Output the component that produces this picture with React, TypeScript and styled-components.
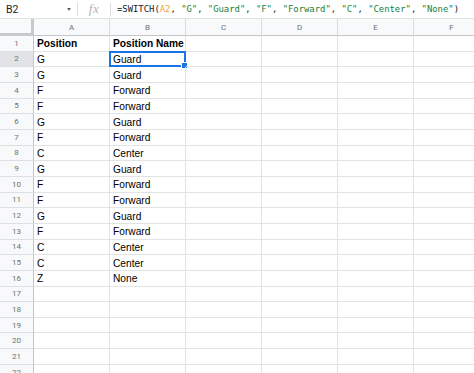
import React from "react";
import styled, { createGlobalStyle } from "styled-components";

const Global = createGlobalStyle`
  html, body { margin: 0; padding: 0; background: #fff; overflow: hidden; }
  body { font-family: "Liberation Sans", Arial, sans-serif; }
`;

const Page = styled.div`
  width: 474px;
  height: 373px;
  overflow: hidden;
  background: #fff;
`;

const Toolbar = styled.div`
  display: flex;
  align-items: center;
  height: 19px;
  box-sizing: border-box;
  border-bottom: 1px solid #e1e3e1;
  background: #fff;
`;

const NameBox = styled.div`
  display: flex;
  align-items: center;
  justify-content: space-between;
  width: 77px;
  box-sizing: border-box;
  padding: 0 6px 0 6px;
  font-family: Roboto, "Liberation Sans", sans-serif;
  font-size: 10.5px;
  color: #202124;
`;

const Caret = styled.span`
  width: 0;
  height: 0;
  border-left: 2.5px solid transparent;
  border-right: 2.5px solid transparent;
  border-top: 3px solid #5f6368;
  margin-top: 1px;
`;

const Sep = styled.div`
  width: 1px;
  height: 13px;
  background: #dadce0;
`;

const FxBox = styled.div`
  width: 32px;
  display: flex;
  justify-content: center;
  align-items: center;
  font-family: "Liberation Serif", serif;
  font-style: italic;
  font-size: 13px;
  color: #b0b3b7;
  letter-spacing: 0.5px;
`;

const Formula = styled.div`
  padding-left: 6px;
  font-family: "DejaVu Sans Mono", monospace;
  font-size: 8.9px;
  color: #202124;
  white-space: pre;
`;

const Tok = styled.span<{ $kind: "ref" | "str" | "plain" }>`
  color: ${(p) =>
    p.$kind === "ref" ? "#f2a33a" : p.$kind === "str" ? "#188038" : "#202124"};
`;

const Grid = styled.div`
  display: grid;
  grid-template-columns: 34px repeat(6, 76px);
  grid-template-rows: 17px;
  grid-auto-rows: 15.67px;
`;

const Corner = styled.div`
  background: #f8f9fa;
  box-sizing: border-box;
  border-right: 3px solid #c7c9cc;
  border-bottom: 3px solid #c7c9cc;
`;

const ColHead = styled.div`
  background: #f8f9fa;
  box-sizing: border-box;
  border-right: 1px solid #d9dbdd;
  border-bottom: 1px solid #c4c7c5;
  display: flex;
  align-items: center;
  justify-content: center;
  font-family: Roboto, "Liberation Sans", sans-serif;
  font-size: 8px;
  color: #6d7175;
`;

const RowHead = styled.div<{ $active?: boolean }>`
  background: ${(p) => (p.$active ? "#e1e3e6" : "#f8f9fa")};
  box-sizing: border-box;
  border-right: 1px solid #c4c7c5;
  border-bottom: 1px solid #dde0e2;
  display: flex;
  align-items: center;
  justify-content: center;
  font-family: Roboto, "Liberation Sans", sans-serif;
  font-size: 8px;
  color: #6d7175;
`;

const Cell = styled.div<{ $bold?: boolean; $selected?: boolean }>`
  position: relative;
  box-sizing: border-box;
  border-right: 1px solid #e2e3e3;
  border-bottom: 1px solid #e2e3e3;
  display: flex;
  align-items: center;
  padding-left: 3px;
  padding-top: 1px;
  font-family: "Liberation Sans", Arial, sans-serif;
  font-size: 10.2px;
  font-weight: ${(p) => (p.$bold ? 700 : 400)};
  color: #000;
  white-space: nowrap;
  overflow: visible;
`;

const Selection = styled.div`
  position: absolute;
  left: -1px;
  top: -1px;
  right: -1px;
  bottom: -1px;
  border: 2px solid #1a73e8;
  box-sizing: border-box;
  pointer-events: none;
`;

const Handle = styled.div`
  position: absolute;
  right: -4px;
  bottom: -4px;
  width: 5px;
  height: 5px;
  background: #1a73e8;
  border: 1px solid #fff;
`;

const cols = ["A", "B", "C", "D", "E", "F"];

const data: [string, string][] = [
  ["Position", "Position Name"],
  ["G", "Guard"],
  ["G", "Guard"],
  ["F", "Forward"],
  ["F", "Forward"],
  ["G", "Guard"],
  ["F", "Forward"],
  ["C", "Center"],
  ["G", "Guard"],
  ["F", "Forward"],
  ["F", "Forward"],
  ["G", "Guard"],
  ["F", "Forward"],
  ["C", "Center"],
  ["C", "Center"],
  ["Z", "None"],
];

const tokens: [string, "ref" | "str" | "plain"][] = [
  ["=SWITCH(", "plain"],
  ["A2", "ref"],
  [", ", "plain"],
  ['"G"', "str"],
  [", ", "plain"],
  ['"Guard"', "str"],
  [", ", "plain"],
  ['"F"', "str"],
  [", ", "plain"],
  ['"Forward"', "str"],
  [", ", "plain"],
  ['"C"', "str"],
  [", ", "plain"],
  ['"Center"', "str"],
  [", ", "plain"],
  ['"None"', "str"],
  [")", "plain"],
];

export default function App() {
  const rows = Array.from({ length: 23 }, (_, i) => i + 1);
  return (
    <Page>
      <Global />
      <Toolbar>
        <NameBox>
          <span>B2</span>
          <Caret />
        </NameBox>
        <Sep />
        <FxBox>fx</FxBox>
        <Sep />
        <Formula>
          {tokens.map(([t, k], i) => (
            <Tok key={i} $kind={k}>
              {t}
            </Tok>
          ))}
        </Formula>
      </Toolbar>
      <Grid>
        <Corner />
        {cols.map((c) => (
          <ColHead key={c}>{c}</ColHead>
        ))}
        {rows.map((r) => {
          const d = data[r - 1];
          return (
            <React.Fragment key={r}>
              <RowHead $active={r === 2}>{r}</RowHead>
              {cols.map((c, ci) => {
                const val = d && ci < 2 ? d[ci] : "";
                const sel = r === 2 && c === "B";
                return (
                  <Cell key={c} $bold={r === 1} $selected={sel}>
                    {val}
                    {sel && (
                      <Selection>
                        <Handle />
                      </Selection>
                    )}
                  </Cell>
                );
              })}
            </React.Fragment>
          );
        })}
      </Grid>
    </Page>
  );
}
